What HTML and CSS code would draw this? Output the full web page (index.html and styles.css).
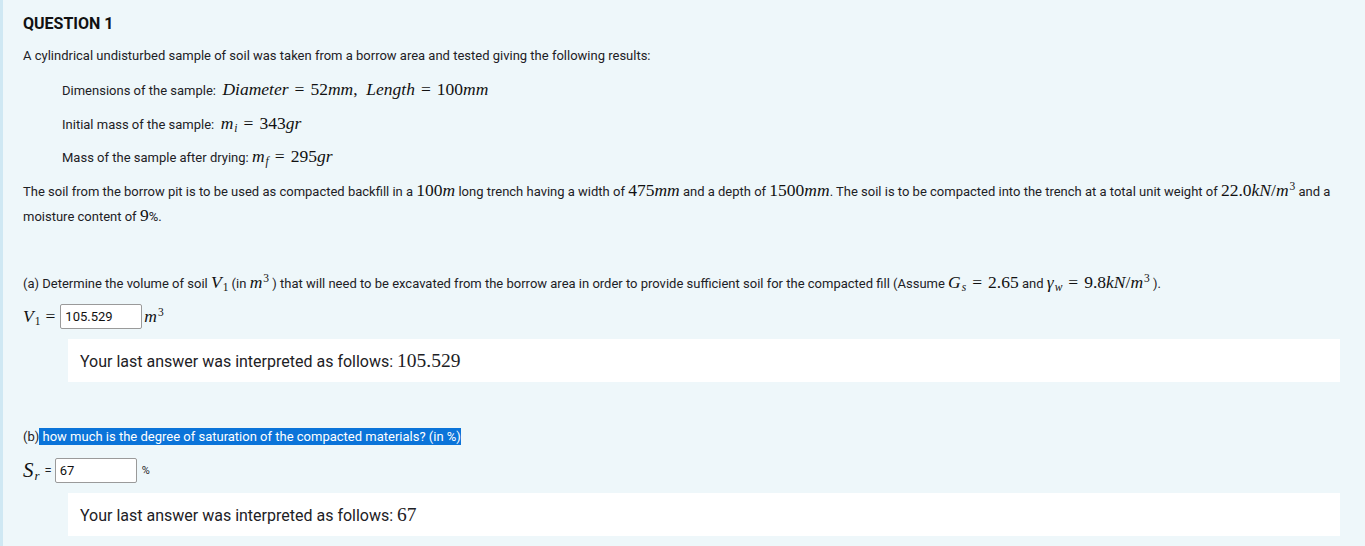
FILE: index.html
```html
<!DOCTYPE html>
<html>
<head>
<meta charset="utf-8">
<link rel="stylesheet" href="styles.css">
</head>
<body>
<div class="que">
  <h3 class="qno">QUESTION 1</h3>
  <p class="intro">A cylindrical undisturbed sample of soil was taken from a borrow area and tested giving the following results:</p>
  <div class="indent">
    <div class="iline">Dimensions of the sample: &nbsp;<span class="m"><i>Diameter</i><span class="rel">=</span>52<i>mm</i>, &nbsp;<i>Length</i><span class="rel">=</span>100<i>mm</i></span></div>
    <div class="iline">Initial mass of the sample: &nbsp;<span class="m"><i>m</i><sub>i</sub><span class="rel">=</span>343<i>gr</i></span></div>
    <div class="iline">Mass of the sample after drying: <span class="m"><i>m</i><sub>f</sub><span class="rel">=</span>295<i>gr</i></span></div>
  </div>
  <p class="para">The soil from the borrow pit is to be used as compacted backfill in a <span class="m">100<i>m</i></span> long trench having a width of <span class="m">475<i>mm</i></span> and a depth of <span class="m">1500<i>mm</i></span>. The soil is to be compacted into the trench at a total unit weight of <span class="m">22.0<i>kN</i>/<i>m</i><sup>3</sup></span> and a moisture content of <span class="m">9</span>%.</p>

  <p class="part">(a) Determine the volume of soil <span class="m"><i>V</i><sub class="up">1</sub></span> (in <span class="m"><i>m</i><sup>3</sup></span> ) that will need to be excavated from the borrow area in order to provide sufficient soil for the compacted fill (Assume <span class="m"><i>G</i><sub>s</sub><span class="rel">=</span>2.65</span> and <span class="m"><i>γ</i><sub>w</sub><span class="rel">=</span>9.8<i>kN</i>/<i>m</i><sup>3</sup></span> ).</p>
  <div class="ansrow">
    <span class="m"><i>V</i><sub class="up">1</sub><span class="rel">=</span></span>
    <span class="inp">105.529</span>
    <span class="m"><i>m</i><sup>3</sup></span>
  </div>
  <div class="feedback">Your last answer was interpreted as follows: <span class="fm">105.529</span></div>

  <p class="partb">(b)<span class="sel"> how much is the degree of saturation of the compacted materials? (in %)</span></p>
  <div class="ansrow2">
    <span class="m sr"><i>S</i><sub>r</sub></span>
    <span class="eq">=</span>
    <span class="inp">67</span>
    <span class="pct">%</span>
  </div>
  <div class="feedback">Your last answer was interpreted as follows: <span class="fm">67</span></div>
</div>
</body>
</html>
```

FILE: styles.css
```css
html, body {
  margin: 0;
  padding: 0;
  background: #eef7fa;
}
.que {
  background: #eef7fa;
  border-left: 3px solid #cfe8f3;
  padding: 14px 25px 10px 20px;
  min-height: 522px;
  font-family: Roboto, "Liberation Sans", sans-serif;
  font-size: 13px;
  color: #1d2125;
}
.qno {
  margin: 0;
  font-size: 16px;
  line-height: 20px;
  font-weight: bold;
  color: #111;
}
.intro {
  margin: 12px 0 0 0;
  line-height: 20px;
}
.indent {
  margin: 8px 0 0 39px;
}
.iline {
  line-height: 33.5px;
  height: 33.5px;
}
.m {
  font-family: "Liberation Serif", "DejaVu Serif", serif;
  font-size: 17.5px;
  color: #111;
  line-height: 1;
}
.m i {
  font-style: italic;
}
.rel {
  margin: 0 6px;
  font-style: normal;
}
.m sub, .m sup {
  font-size: 11.5px;
  line-height: 0;
  vertical-align: baseline;
  position: relative;
}
.m sub {
  top: 3px;
  font-style: italic;
  margin-left: 1px;
}
.m sub.up {
  font-style: normal;
}
.m sup {
  top: -6px;
  margin-left: 1px;
}
.para {
  margin: 4px 0 0 0;
  line-height: 25px;
}
.part {
  margin: 45px 0 0 0;
  line-height: 20px;
}
.ansrow {
  margin-top: 10px;
  height: 26px;
  display: flex;
  align-items: center;
  gap: 2px;
}
.ansrow .rel {
  margin: 0 3px 0 5px;
}
.inp {
  display: inline-block;
  box-sizing: border-box;
  width: 82px;
  height: 25px;
  line-height: 23px;
  border: 1px solid #9a9a9a;
  border-radius: 2px;
  background: #fff;
  padding: 0 4px;
  font-size: 13px;
  color: #111;
}
.feedback {
  margin: 9px 0 0 45px;
  background: #fff;
  height: 43px;
  line-height: 43px;
  padding-left: 12px;
  font-size: 16px;
  color: #1d2125;
}
.fm {
  font-family: "Liberation Serif", "DejaVu Serif", serif;
  font-size: 19.5px;
}
.partb {
  margin: 45px 0 0 0;
  line-height: 20px;
}
.sel {
  background: #0b74d9;
  color: #fff;
  padding: 1px 0;
}
.ansrow2 {
  margin-top: 11px;
  height: 26px;
  display: flex;
  align-items: center;
}
.sr {
  font-size: 21px;
}
.sr sub {
  font-size: 13px;
}
.eq {
  margin: 0 3px 0 5px;
  font-size: 13px;
}
.pct {
  margin-left: 5px;
  font-size: 11px;
}
```
